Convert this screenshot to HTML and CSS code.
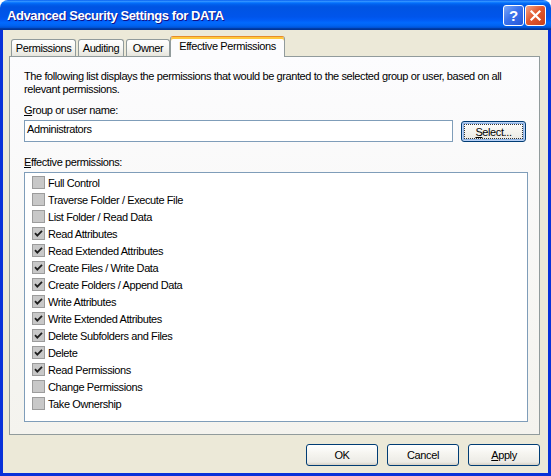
FILE: index.html
```html
<!DOCTYPE html>
<html>
<head>
<meta charset="utf-8">
<title>Advanced Security Settings for DATA</title>
<link rel="stylesheet" href="styles.css">
</head>
<body>
<div class="window">
  <div class="titlebar">
    <span class="title">Advanced Security Settings for DATA</span>
    <div class="tb-buttons">
      <span class="tb-btn help">?</span>
      <span class="tb-btn close"><svg width="13" height="13" viewBox="0 0 13 13"><path d="M2.5 2.5 10.5 10.5M10.5 2.5 2.5 10.5" stroke="#fff" stroke-width="2.2" stroke-linecap="square"/></svg></span>
    </div>
  </div>
  <div class="frame">
    <div class="tabs">
      <span class="tab t1">Permissions</span>
      <span class="tab t2">Auditing</span>
      <span class="tab t3">Owner</span>
      <span class="tab active">Effective Permissions</span>
    </div>
    <div class="panel">
      <p class="desc">The following list displays the permissions that would be granted to the selected group or user, based on all<br>relevant permissions.</p>
      <label class="lbl"><u>G</u>roup or user name:</label>
      <div class="user-row">
        <div class="input">Administrators</div>
        <button class="btn select"><span class="focus"><u>S</u>elect...</span></button>
      </div>
      <label class="lbl lbl2"><u>E</u>ffective permissions:</label>
      <div class="list">
        <div class="item"><svg class="cb" viewBox="0 0 13 13"><rect x=".5" y=".5" width="12" height="12" class="box"/></svg><span>Full Control</span></div>
        <div class="item"><svg class="cb" viewBox="0 0 13 13"><rect x=".5" y=".5" width="12" height="12" class="box"/></svg><span>Traverse Folder / Execute File</span></div>
        <div class="item"><svg class="cb" viewBox="0 0 13 13"><rect x=".5" y=".5" width="12" height="12" class="box"/></svg><span>List Folder / Read Data</span></div>
        <div class="item"><svg class="cb" viewBox="0 0 13 13"><rect x=".5" y=".5" width="12" height="12" class="box"/><path class="chk" d="M3 6.2 5.3 8.6 10 3.8"/></svg><span>Read Attributes</span></div>
        <div class="item"><svg class="cb" viewBox="0 0 13 13"><rect x=".5" y=".5" width="12" height="12" class="box"/><path class="chk" d="M3 6.2 5.3 8.6 10 3.8"/></svg><span>Read Extended Attributes</span></div>
        <div class="item"><svg class="cb" viewBox="0 0 13 13"><rect x=".5" y=".5" width="12" height="12" class="box"/><path class="chk" d="M3 6.2 5.3 8.6 10 3.8"/></svg><span>Create Files / Write Data</span></div>
        <div class="item"><svg class="cb" viewBox="0 0 13 13"><rect x=".5" y=".5" width="12" height="12" class="box"/><path class="chk" d="M3 6.2 5.3 8.6 10 3.8"/></svg><span>Create Folders / Append Data</span></div>
        <div class="item"><svg class="cb" viewBox="0 0 13 13"><rect x=".5" y=".5" width="12" height="12" class="box"/><path class="chk" d="M3 6.2 5.3 8.6 10 3.8"/></svg><span>Write Attributes</span></div>
        <div class="item"><svg class="cb" viewBox="0 0 13 13"><rect x=".5" y=".5" width="12" height="12" class="box"/><path class="chk" d="M3 6.2 5.3 8.6 10 3.8"/></svg><span>Write Extended Attributes</span></div>
        <div class="item"><svg class="cb" viewBox="0 0 13 13"><rect x=".5" y=".5" width="12" height="12" class="box"/><path class="chk" d="M3 6.2 5.3 8.6 10 3.8"/></svg><span>Delete Subfolders and Files</span></div>
        <div class="item"><svg class="cb" viewBox="0 0 13 13"><rect x=".5" y=".5" width="12" height="12" class="box"/><path class="chk" d="M3 6.2 5.3 8.6 10 3.8"/></svg><span>Delete</span></div>
        <div class="item"><svg class="cb" viewBox="0 0 13 13"><rect x=".5" y=".5" width="12" height="12" class="box"/><path class="chk" d="M3 6.2 5.3 8.6 10 3.8"/></svg><span>Read Permissions</span></div>
        <div class="item"><svg class="cb" viewBox="0 0 13 13"><rect x=".5" y=".5" width="12" height="12" class="box"/></svg><span>Change Permissions</span></div>
        <div class="item"><svg class="cb" viewBox="0 0 13 13"><rect x=".5" y=".5" width="12" height="12" class="box"/></svg><span>Take Ownership</span></div>
      </div>
    </div>
    <div class="actions">
      <button class="btn">OK</button>
      <button class="btn">Cancel</button>
      <button class="btn"><u>A</u>pply</button>
    </div>
  </div>
</div>
</body>
</html>
```

FILE: styles.css
```css
html, body {
  margin: 0;
  padding: 0;
  background: #ffffff;
}

body {
  font-family: "Liberation Sans", Arial, sans-serif;
  font-size: 11px;
  letter-spacing: -0.4px;
  color: #000000;
}

.window {
  width: 551px;
  height: 476px;
  display: flex;
  flex-direction: column;
  border-radius: 8px 8px 0 0;
  overflow: hidden;
}

.titlebar {
  height: 30px;
  flex: none;
  box-sizing: border-box;
  display: flex;
  align-items: center;
  justify-content: space-between;
  padding: 0 5px 0 7px;
  background: linear-gradient(to bottom, #0058EE 0%, #3593FF 4%, #288EFF 6%, #127DFF 8%, #036FFC 10%, #0262EE 14%, #0057E5 20%, #0054E3 24%, #0055EB 56%, #005BF5 66%, #026AFE 76%, #0062EF 86%, #0052D6 92%, #0040AB 94%, #003092 100%);
}

.title {
  color: #ffffff;
  font-weight: bold;
  font-size: 13px;
  letter-spacing: -0.4px;
  text-shadow: 1px 1px 0 #0F1089;
}

.tb-buttons {
  display: flex;
  gap: 1px;
  margin-top: 1px;
}

.tb-btn {
  width: 21px;
  height: 21px;
  box-sizing: border-box;
  border: 1px solid #ffffff;
  border-radius: 3px;
  display: flex;
  align-items: center;
  justify-content: center;
}

.help {
  background: linear-gradient(135deg, #7BA7F8 0%, #3C73EC 45%, #2556D8 100%);
  color: #ffffff;
  font-weight: bold;
  font-size: 15px;
  letter-spacing: 0;
}

.close {
  background: linear-gradient(135deg, #F3A58A 0%, #E2592F 45%, #C9401C 100%);
}

.frame {
  flex: 1;
  display: flex;
  flex-direction: column;
  background: #ECE9D8;
  border: 3px solid #0831D9;
  border-top: 0;
  padding: 6px 8px 7px 6px;
}

.tabs {
  height: 20px;
  display: flex;
  align-items: flex-end;
  padding-left: 2px;
}

.tab {
  height: 17px;
  box-sizing: border-box;
  border: 1px solid #919B9C;
  border-bottom: 0;
  border-radius: 3px 3px 0 0;
  background: linear-gradient(to bottom, #FFFFFF 0%, #F7F7F4 50%, #E6E5DD 100%);
  display: flex;
  align-items: center;
  justify-content: center;
  margin-right: 2px;
}

.t1 { width: 65px; }
.t2 { width: 46px; }
.t3 { width: 44px; margin-right: 0; }

.tab.active {
  width: 115px;
  height: 21px;
  margin-bottom: -1px;
  padding-bottom: 2px;
  margin-right: 0;
  background: #FCFCFE;
  border-top-color: #E68B2C;
  box-shadow: inset 0 2px 0 #FFC83C;
  position: relative;
  z-index: 1;
}

.panel {
  height: 379px;
  box-sizing: border-box;
  border: 1px solid #919B9C;
  background: linear-gradient(to bottom, #FCFCFE 0%, #F4F3EE 100%);
  padding: 13px 11px 0 14px;
  display: flex;
  flex-direction: column;
}

.desc {
  margin: 0;
  line-height: 13px;
  white-space: nowrap;
}

.lbl {
  display: block;
  line-height: 13px;
  margin-top: 8px;
}

.lbl2 {
  margin-top: 14px;
}

.user-row {
  display: flex;
  align-items: flex-start;
  margin-top: 3px;
}

.input {
  flex: 1;
  height: 22px;
  box-sizing: border-box;
  border: 1px solid #7F9DB9;
  background: #ffffff;
  padding: 0 2px;
  line-height: 17px;
}

.btn {
  font: inherit;
  letter-spacing: inherit;
  color: #000000;
  width: 72px;
  height: 22px;
  box-sizing: border-box;
  border: 1px solid #003C74;
  border-radius: 3px;
  background: linear-gradient(to bottom, #FFFFFF 0%, #F5F4EF 45%, #ECEBE6 85%, #D6D0C5 100%);
  padding: 0;
  display: flex;
  align-items: center;
  justify-content: center;
}

.select {
  width: 65px;
  height: 21px;
  margin: 1px 2px 0 8px;
  padding: 2px;
  box-shadow: inset 0 0 0 1px #B9D1F6, inset 0 0 0 2px #8DB2E3;
}

.focus {
  flex: 1;
  align-self: stretch;
  border: 1px dotted #333333;
  display: flex;
  align-items: center;
  justify-content: center;
}

.list {
  margin-top: 3px;
  height: 250px;
  box-sizing: border-box;
  border: 1px solid #7F9DB9;
  background: #ffffff;
  padding: 1px 0 0 7px;
}

.item {
  height: 17px;
  display: flex;
  align-items: center;
}

.cb {
  width: 13px;
  height: 13px;
  flex: none;
  margin-right: 3px;
}

.box {
  fill: #C8C8C8;
  stroke: #9C9C9C;
}

.chk {
  fill: none;
  stroke: #1E1E1E;
  stroke-width: 1.8;
}

.actions {
  display: flex;
  justify-content: flex-end;
  gap: 9px;
  margin-top: 9px;
}
```
